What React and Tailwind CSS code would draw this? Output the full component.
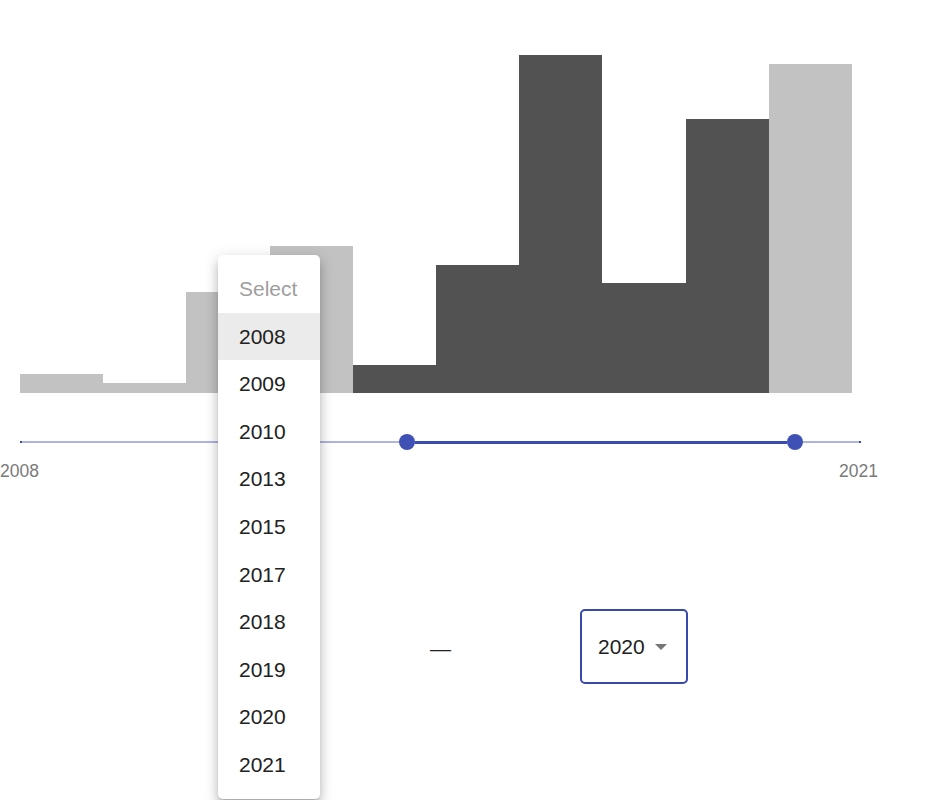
import React from "react";

const bars = [
  { h: 19, dark: false },
  { h: 10, dark: false },
  { h: 101, dark: false },
  { h: 147, dark: false },
  { h: 28, dark: true },
  { h: 128, dark: true },
  { h: 338, dark: true },
  { h: 110, dark: true },
  { h: 274, dark: true },
  { h: 329, dark: false },
];

const years = ["2008", "2009", "2010", "2013", "2015", "2017", "2018", "2019", "2020", "2021"];

export default function App() {
  return (
    <div
      className="relative w-[927px] h-[800px] overflow-hidden bg-white"
      style={{ fontFamily: '"Liberation Sans", Arial, sans-serif' }}
    >
      {/* Histogram */}
      <div className="ml-[20px] mt-[55px] w-[832px] h-[338px] flex items-end">
        {bars.map((b, i) => (
          <div
            key={i}
            className={b.dark ? "flex-1 bg-[#525252]" : "flex-1 bg-[#c2c2c2]"}
            style={{ height: b.h }}
          />
        ))}
      </div>

      {/* Range slider */}
      <div className="ml-[20px] mt-[41px] w-[841px] h-[16px] flex items-center">
        <div className="w-[2px] h-[2px] bg-[#3a4bb5]" />
        <div className="w-[377px] h-[2px] bg-[#adb4e0]" />
        <div className="w-[16px] h-[16px] rounded-full bg-[#3f51b5]" />
        <div className="w-[372px] h-[3px] bg-[#3a4bb5]" />
        <div className="w-[16px] h-[16px] rounded-full bg-[#3f51b5]" />
        <div className="flex-1 h-[2px] bg-[#adb4e0]" />
        <div className="w-[2px] h-[2px] bg-[#3a4bb5]" />
      </div>
      <div className="mt-[11px] w-[878px] flex justify-between text-[17.5px] leading-[20px] text-[#7a7a7a]">
        <span>2008</span>
        <span>2021</span>
      </div>

      {/* Bottom select row */}
      <div className="mt-[128px] ml-[430px] flex items-center gap-[129px]">
        <span className="w-[21px] text-[21px] leading-[24px] text-[#212121] pt-[4px]">—</span>
        <div className="w-[108px] h-[75px] border-2 border-[#3949ab] rounded-[5px] flex items-center gap-[10px] pl-[16px]">
          <span className="text-[21px] leading-[24px] text-[#212121]">2020</span>
          <svg width="12" height="6" viewBox="0 0 12 6">
            <path d="M0 0 L12 0 L6 6 Z" fill="#757575" />
          </svg>
        </div>
      </div>

      {/* Open menu (overlay) */}
      <div className="absolute left-[218px] top-[255px] w-[102px] bg-white rounded-[5px] py-[10px] flex flex-col shadow-[0px_5px_5px_-3px_rgba(0,0,0,0.2),0px_8px_10px_1px_rgba(0,0,0,0.14),0px_3px_14px_2px_rgba(0,0,0,0.12)]">
        <div className="h-[47.6px] pl-[21px] flex items-center text-[21px] text-[#9e9e9e]">Select</div>
        {years.map((y, i) => (
          <div
            key={y}
            className={
              i === 0
                ? "h-[47.6px] pl-[21px] flex items-center text-[21px] text-[#212121] bg-[#ebebeb]"
                : "h-[47.6px] pl-[21px] flex items-center text-[21px] text-[#212121]"
            }
          >
            {y}
          </div>
        ))}
      </div>
    </div>
  );
}
